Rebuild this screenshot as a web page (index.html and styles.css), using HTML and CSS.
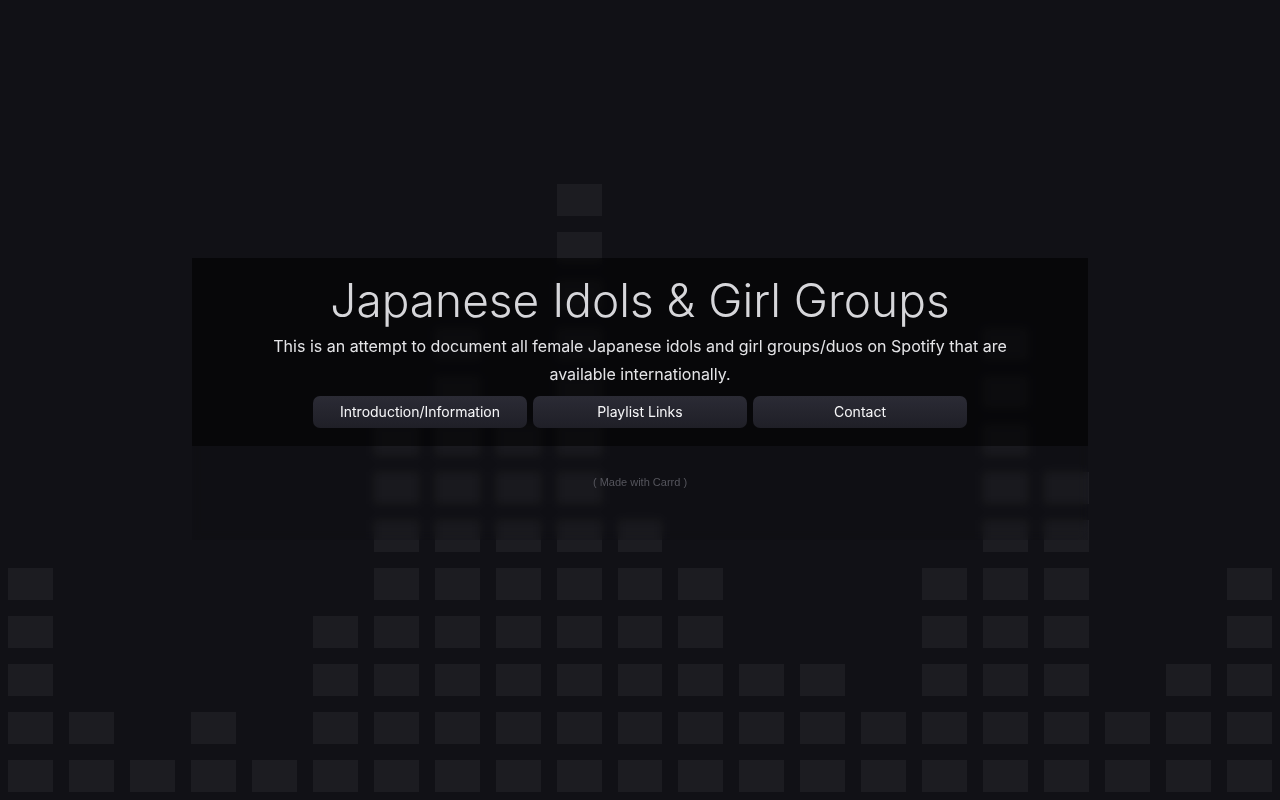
FILE: index.html
```html
<!DOCTYPE html>
<html lang="en">
<head>
  <meta charset="UTF-8" />
  <meta name="viewport" content="width=device-width, initial-scale=1.0"/>
  <title>Japanese Idols &amp; Girl Groups</title>
  <link rel="stylesheet" href="styles.css">
</head>
<body>
  <div class="bars" id="bars"></div>

  <div class="wrapper">
    <div class="panel">
      <div class="intro">
        <h1>Japanese Idols &amp; Girl Groups</h1>
        <p>This is an attempt to document all female Japanese idols and girl groups/duos on Spotify that are available internationally.</p>
        <div class="buttons">
          <a href="#intro" class="btn">Introduction/Information</a>
          <a href="#playlists" class="btn">Playlist Links</a>
          <a href="#contact" class="btn">Contact</a>
        </div>
      </div>
      <div class="credit">
        <a href="#">( Made with Carrd )</a>
      </div>
    </div>
  </div>

  <script>
    // number of blocks in each equalizer column, left to right
    const alturas = [5, 2, 1, 2, 1, 4, 8, 10, 8, 13, 6, 5, 3, 3, 2, 5, 10, 7, 2, 3, 5];
    const bars = document.getElementById('bars');
    alturas.forEach(function (n) {
      const col = document.createElement('div');
      col.className = 'col';
      for (let i = 0; i < n; i++) {
        const b = document.createElement('span');
        b.className = 'block';
        col.appendChild(b);
      }
      bars.appendChild(col);
    });
  </script>
</body>
</html>
```

FILE: styles.css
```css
* {
  box-sizing: border-box;
}

body {
  font-family: 'Inter', 'Liberation Sans', sans-serif;
  background-color: #111116;
  color: #fff;
  margin: 0;
  min-height: 100vh;
}

.bars {
  position: fixed;
  inset: 0;
  display: flex;
  align-items: flex-end;
  padding-bottom: 8px;
  z-index: 0;
}

.col {
  flex: 1;
  display: flex;
  flex-direction: column-reverse;
  gap: 16px;
  padding: 0 8px;
}

.block {
  display: block;
  height: 32px;
  background-color: #1c1c21;
}

.wrapper {
  position: relative;
  z-index: 1;
  min-height: 100vh;
  display: flex;
  align-items: center;
  justify-content: center;
}

.panel {
  width: 896px;
  margin-top: -2px;
  background-color: rgba(8, 8, 10, 0.12);
  backdrop-filter: blur(5px);
}

.intro {
  padding: 14px 70px 18px;
  text-align: center;
  background-color: rgba(0, 0, 0, 0.5);
}

h1 {
  margin: 0 0 4px;
  font-size: 46px;
  font-weight: 300;
  line-height: 56px;
  color: #d6d6da;
}

.intro p {
  margin: 0 auto;
  max-width: 740px;
  font-size: 16px;
  line-height: 28px;
  color: #e4e4e7;
}

.buttons {
  display: flex;
  justify-content: center;
  gap: 6px;
  margin-top: 8px;
}

.btn {
  width: 214px;
  height: 32px;
  line-height: 32px;
  border-radius: 7px;
  background: linear-gradient(to bottom, #2b2b35, #1f1f27);
  color: #f6f6f8;
  font-size: 14px;
  text-decoration: none;
}

.credit {
  padding: 28px 0 50px;
  text-align: center;
  font-family: 'Liberation Sans', sans-serif;
  font-size: 11px;
  line-height: 16px;
}

.credit a {
  color: #55555d;
  text-decoration: none;
}
```
